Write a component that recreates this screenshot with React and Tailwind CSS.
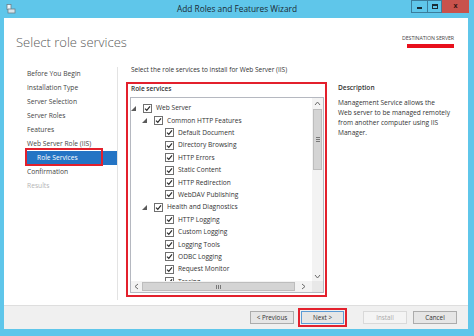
import React from 'react';

const NAV = [
  { label: 'Before You Begin' },
  { label: 'Installation Type' },
  { label: 'Server Selection' },
  { label: 'Server Roles' },
  { label: 'Features' },
  { label: 'Web Server Role (IIS)' },
  { label: 'Role Services', active: true },
  { label: 'Confirmation' },
  { label: 'Results', disabled: true },
];

const TREE = [
  { label: 'Web Server', level: 0, open: true },
  { label: 'Common HTTP Features', level: 1, open: true },
  { label: 'Default Document', level: 2 },
  { label: 'Directory Browsing', level: 2 },
  { label: 'HTTP Errors', level: 2 },
  { label: 'Static Content', level: 2 },
  { label: 'HTTP Redirection', level: 2 },
  { label: 'WebDAV Publishing', level: 2 },
  { label: 'Health and Diagnostics', level: 1, open: true },
  { label: 'HTTP Logging', level: 2 },
  { label: 'Custom Logging', level: 2 },
  { label: 'Logging Tools', level: 2 },
  { label: 'ODBC Logging', level: 2 },
  { label: 'Request Monitor', level: 2 },
  { label: 'Tracing', level: 2 },
];

const INDENT = ['pl-0', 'pl-[11px]', 'pl-[22px]'];

function Chevron({ dir }) {
  const d = {
    up: 'M1 5 L3.5 2 L6 5',
    down: 'M1 2 L3.5 5 L6 2',
    left: 'M5 1 L2 3.5 L5 6',
    right: 'M2 1 L5 3.5 L2 6',
  }[dir];
  return (
    <svg width="7" height="7" viewBox="0 0 7 7">
      <path d={d} fill="none" stroke="#6a6a6a" strokeWidth="1" />
    </svg>
  );
}

function Checkbox() {
  return (
    <span className="w-[9px] h-[9px] border border-[#707070] bg-white flex items-center justify-center shrink-0">
      <svg width="7" height="7" viewBox="0 0 7 7">
        <path d="M1 3.6 L2.8 5.4 L6 1.4" fill="none" stroke="#2b2b2b" strokeWidth="1.2" />
      </svg>
    </span>
  );
}

function TreeRow({ item }) {
  return (
    <div className={`h-[12.4px] flex items-center ${INDENT[item.level]}`}>
      <span className="w-[12px] shrink-0 flex items-center">
        {item.open && (
          <svg width="5" height="5" viewBox="0 0 5 5">
            <polygon points="5,0 5,5 0,5" fill="#5a5a5a" />
          </svg>
        )}
      </span>
      <Checkbox />
      <span className="ml-[4px] text-[6.6px] text-[#333] whitespace-nowrap">{item.label}</span>
    </div>
  );
}

function Btn({ children, primary, disabled }) {
  const tone = disabled
    ? 'bg-[#f4f4f4] border-[#d9d9d9] text-[#a8a8a8]'
    : primary
    ? 'bg-[#e6e6e6] border-[#5b9bd5] text-[#333]'
    : 'bg-[#e6e6e6] border-[#acacac] text-[#333]';
  return (
    <div className={`h-[13px] flex items-center justify-center border text-[6.3px] ${tone} ${primary ? 'w-[43px]' : 'w-[44px]'}`}>
      {children}
    </div>
  );
}

export default function App() {
  return (
    <div className="w-[474px] h-[336px] bg-[#5fc6ea] flex flex-col overflow-hidden font-['Open_Sans',sans-serif]">
      {/* title bar */}
      <div className="h-[18px] relative flex items-start">
        <div className="pl-[6px] pt-[4px]">
          <svg width="10" height="10" viewBox="0 0 10 10">
            <rect x="1" y="0.5" width="4" height="5" fill="#eef6fa" stroke="#6b7f8a" strokeWidth="0.8" />
            <rect x="2" y="5" width="7" height="4" fill="#d9e4ea" stroke="#6b7f8a" strokeWidth="0.8" />
          </svg>
        </div>
        <div className="absolute inset-x-0 top-[3px] text-center text-[8.3px] text-[#1a2a33]">Add Roles and Features Wizard</div>
        <div className="ml-auto mr-[5px] flex h-[13px]">
          <div className="w-[16px] border border-[#3c7d9c] border-r-0 flex items-center justify-center">
            <span className="w-[5px] h-[2px] bg-[#1b2b33] mt-[3px]" />
          </div>
          <div className="w-[15px] border border-[#3c7d9c] flex items-center justify-center">
            <span className="w-[6px] h-[5px] border border-[#1b2b33] border-t-2" />
          </div>
          <div className="w-[27px] bg-[#c9524c] flex items-center justify-center text-[7px] font-bold text-[#3a1716]">x</div>
        </div>
      </div>

      {/* window body */}
      <div className="flex-1 ml-[4px] mr-[6px] bg-white flex flex-col">
        <div className="h-[44px] flex justify-between">
          <div className="pl-[12px] pt-[16px] text-[13px] leading-[16px] font-light text-[#5a5a5a]">Select role services</div>
          <div className="pr-[14px] pt-[17px] flex flex-col items-end">
            <div className="text-[5.3px] leading-[6px] text-[#444] tracking-[-0.1px]">DESTINATION SERVER</div>
            <div className="mt-[3px] h-[4px] w-[47px] bg-[#e8101c]" />
          </div>
        </div>

        <div className="flex-1 flex">
          {/* nav */}
          <div className="w-[114px] mt-[5px] mb-[5px] border-r border-[#e3e3e3] flex flex-col">
            {NAV.map((n) =>
              n.active ? (
                <div key={n.label} className="relative h-[14px] ml-[21px] bg-[#2474c4] flex items-center pl-[12px] text-[6.7px] text-white">
                  {n.label}
                  <div className="absolute left-0 top-[-3px] w-[78px] h-[18px] border-2 border-[#e3202c]" />
                </div>
              ) : (
                <div
                  key={n.label}
                  className={`h-[14px] flex items-center pl-[23px] text-[6.7px] ${n.disabled ? 'text-[#b4b4b4]' : 'text-[#444]'}`}
                >
                  {n.label}
                </div>
              )
            )}
          </div>

          {/* content */}
          <div className="flex-1 flex flex-col">
            <div className="pl-[13px] pt-[3px] h-[13px] leading-[10px] text-[6.5px] text-[#333]">
              Select the role services to install for Web Server (IIS)
            </div>
            <div className="mt-[7px] flex">
              <div className="ml-[8px] w-[201px] border-2 border-[#e3202c] pb-[2px]">
                <div className="h-[10px] leading-[10px] pl-[3px] text-[6.5px] font-semibold text-[#333]">Role services</div>
                <div className="mt-[3px] ml-[2px] w-[194px] h-[196px] border border-[#b5b8c0] flex flex-col">
                  <div className="flex-1 flex min-h-0">
                    <div className="flex-1 overflow-hidden pt-[4px]">
                      {TREE.map((t) => (
                        <TreeRow key={t.label} item={t} />
                      ))}
                    </div>
                    <div className="w-[11px] bg-[#f3f3f3] flex flex-col items-stretch">
                      <div className="h-[11px] flex items-center justify-center">
                        <Chevron dir="up" />
                      </div>
                      <div className="mx-[1px] h-[61px] bg-[#d4d4d4] border border-[#bdbdbd] flex items-center justify-center">
                        <div className="flex flex-col gap-[1px]">
                          <span className="w-[4px] h-[1px] bg-[#777]" />
                          <span className="w-[4px] h-[1px] bg-[#777]" />
                          <span className="w-[4px] h-[1px] bg-[#777]" />
                        </div>
                      </div>
                      <div className="flex-1" />
                      <div className="h-[10px] flex items-center justify-center">
                        <Chevron dir="down" />
                      </div>
                    </div>
                  </div>
                  <div className="h-[11px] flex bg-[#f3f3f3]">
                    <div className="w-[11px] flex items-center justify-center">
                      <Chevron dir="left" />
                    </div>
                    <div className="w-[153px] my-[1px] bg-[#d4d4d4] border border-[#bdbdbd] flex items-center justify-center">
                      <div className="flex gap-[1px]">
                        <span className="w-[1px] h-[4px] bg-[#777]" />
                        <span className="w-[1px] h-[4px] bg-[#777]" />
                        <span className="w-[1px] h-[4px] bg-[#777]" />
                      </div>
                    </div>
                    <div className="flex-1 flex items-center justify-center">
                      <Chevron dir="right" />
                    </div>
                    <div className="w-[11px] bg-[#e8e8e8]" />
                  </div>
                </div>
              </div>

              <div className="ml-[11px] pt-[1px] w-[124px]">
                <div className="h-[10px] leading-[10px] text-[6.6px] font-semibold text-[#333]">Description</div>
                <div className="mt-[5px] text-[6.6px] leading-[10px] text-[#333] whitespace-nowrap">
                  Management Service allows the
                  <br />
                  Web server to be managed remotely
                  <br />
                  from another computer using IIS
                  <br />
                  Manager.
                </div>
              </div>
            </div>
          </div>
        </div>

        {/* footer */}
        <div className="h-[24px] bg-[#f0f0f0] border-t border-[#dedede] flex items-center justify-end pr-[11px]">
          <Btn>&lt; Previous</Btn>
          <div className="ml-[4px] border-2 border-[#e3202c] p-[1px]">
            <Btn primary>Next &gt;</Btn>
          </div>
          <div className="ml-[16px]">
            <Btn disabled>Install</Btn>
          </div>
          <div className="ml-[6px]">
            <Btn>Cancel</Btn>
          </div>
        </div>
      </div>
      <div className="h-[7px]" />
    </div>
  );
}
